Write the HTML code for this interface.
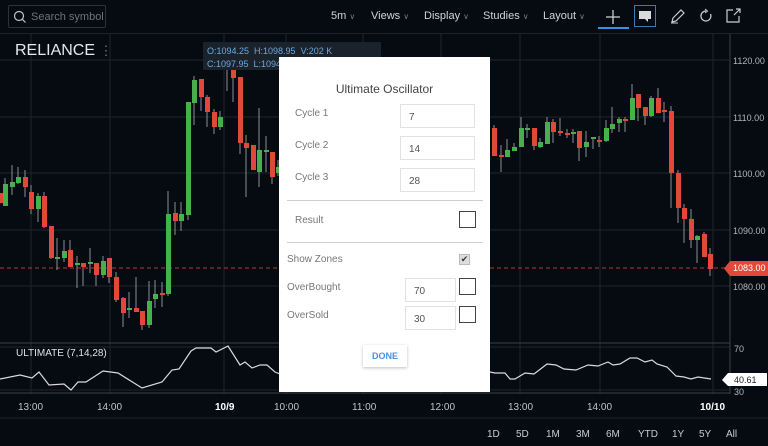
<!DOCTYPE html>
<html><head><meta charset="utf-8"><style>
*{margin:0;padding:0;box-sizing:border-box}
body{width:768px;height:446px;background:#060b12;font-family:"Liberation Sans",sans-serif;overflow:hidden;position:relative;color:#c8ccd2}
.abs{position:absolute}
.tb{font-size:11px;color:#d0d4da;top:10px}
.dlg{left:279px;top:57px;width:211px;height:335px;background:#fff;color:#777;font-size:10px}
.inp{position:absolute;border:1px solid #e2e2e2;color:#555;font-size:10px;padding:7px 0 0 8px}
.cb{position:absolute;border:1px solid #444;width:17px;height:17px;background:#fff}
</style></head><body>
<!-- toolbar -->
<div class="abs" style="left:0;top:33px;width:768px;height:1px;background:#1c232c"></div>
<div class="abs" style="left:8px;top:5px;width:98px;height:23px;border:1px solid #2a323c;border-radius:2px"></div>
<svg class="abs" style="left:13px;top:10px" width="14" height="14"><circle cx="6" cy="6" r="4.5" stroke="#c0c4ca" fill="none" stroke-width="1.2"/><line x1="9.2" y1="9.2" x2="12.5" y2="12.5" stroke="#c0c4ca" stroke-width="1.2"/></svg>
<div class="abs" style="left:31px;top:11px;font-size:11px;color:#6d747c">Search symbol</div>
<div class="abs tb" style="left:331px">5m <span style="color:#777;font-size:8px">∨</span></div>
<div class="abs tb" style="left:371px">Views <span style="color:#777;font-size:8px">∨</span></div>
<div class="abs tb" style="left:424px">Display <span style="color:#777;font-size:8px">∨</span></div>
<div class="abs tb" style="left:483px">Studies <span style="color:#777;font-size:8px">∨</span></div>
<div class="abs tb" style="left:543px">Layout <span style="color:#777;font-size:8px">∨</span></div>
<svg class="abs" style="left:598px;top:6px" width="32" height="24"><line x1="15" y1="4" x2="15" y2="18" stroke="#ccc" stroke-width="1.3"/><line x1="8" y1="11" x2="22" y2="11" stroke="#ccc" stroke-width="1.3"/><rect x="0" y="21" width="31" height="2" fill="#3a8ee6"/></svg>
<svg class="abs" style="left:634px;top:5px" width="24" height="24"><rect x="0.5" y="0.5" width="21" height="21" fill="none" stroke="#3f79b5"/><rect x="5" y="6" width="12" height="8" fill="#d8dadd"/><path d="M11 14 L14 17 L14 14Z" fill="#d8dadd"/></svg>
<svg class="abs" style="left:669px;top:7px" width="18" height="18"><path d="M3 15 L4 11 L12 3 L15 6 L7 14 Z" fill="none" stroke="#ccc" stroke-width="1.2"/><line x1="2" y1="16" x2="9" y2="16" stroke="#ccc"/></svg>
<svg class="abs" style="left:698px;top:8px" width="16" height="16"><path d="M8 3 A5 5 0 1 0 12.5 6" fill="none" stroke="#ccc" stroke-width="1.2"/><path d="M7 1 L9.5 3 L7 5" fill="none" stroke="#ccc"/></svg>
<svg class="abs" style="left:725px;top:7px" width="18" height="18"><path d="M8 3 H2 V15 H14 V9" fill="none" stroke="#ccc" stroke-width="1.2"/><path d="M9 8 L15 2 M11 2 H15 V6" fill="none" stroke="#ccc" stroke-width="1.2"/></svg>

<!-- chart -->
<svg class="abs" style="left:0;top:34px" width="768" height="412">
<g stroke="#1e252e" stroke-width="1">
<line x1="0" y1="26" x2="730" y2="26"/><line x1="0" y1="83" x2="730" y2="83"/><line x1="0" y1="139" x2="730" y2="139"/><line x1="0" y1="196" x2="730" y2="196"/><line x1="0" y1="252" x2="730" y2="252"/>
<line x1="31" y1="0" x2="31" y2="360"/><line x1="110" y1="0" x2="110" y2="360"/><line x1="224" y1="0" x2="224" y2="360"/><line x1="286" y1="0" x2="286" y2="360"/><line x1="363" y1="0" x2="363" y2="360"/><line x1="441" y1="0" x2="441" y2="360"/><line x1="520" y1="0" x2="520" y2="360"/><line x1="600" y1="0" x2="600" y2="360"/><line x1="713" y1="0" x2="713" y2="360"/>
<line x1="0" y1="313" x2="730" y2="313"/><line x1="0" y1="356" x2="730" y2="356"/>
</g>
<line x1="0" y1="309" x2="730" y2="309" stroke="#3a4048"/>
<line x1="0" y1="359" x2="730" y2="359" stroke="#3a4048"/>
<line x1="730" y1="0" x2="730" y2="360" stroke="#3a4048"/>
<line x1="0" y1="384" x2="768" y2="384" stroke="#1c232c"/>
</svg>
<svg class="abs" style="left:0;top:0" width="768" height="446">
<line x1="0" y1="268" x2="730" y2="268" stroke="#b83a30" stroke-dasharray="4,3"/>
<g stroke="#8a8f96" stroke-width="1">
<path d="M5 178V206M12 165V195M18 167V184M25 170V197M31 185V214M38 193V222M44 192V228M51 226V259M57 238V270M64 240V262M70 240V267M77 256V288M83 263V286M90 248V273M96 263V286M103 256V278M109 258V283M116 272V302M123 297V327M129 292V318M136 277V312M142 311V330M149 281V328M155 280V308M162 282V307M168 191V296M175 202V235M181 202V231M188 102V220M194 76V125M201 79V111M207 95V127M214 109V134M220 111V130M227 70V91M233 70V102M240 77V154M246 135V197M253 145V170M259 108V187M266 136V172M272 152V184M278 160V176"/>
<path d="M494 125V156M501 145V172M507 139V157M514 143V151M521 117V147M527 124V138M534 128V150M540 138V148M547 117V144M553 119V143M560 118V136M567 129V138M573 129V143M579 131V161M586 131V157M593 137V149M599 136V147M606 120V142M612 107V133M619 117V132M625 117V132M632 84V120M638 94V121M645 107V125M651 96V117M658 88V113M664 102V122M671 106V208M678 170V223M684 204V243M691 209V248M697 235V263M704 232V257M710 248V276"/>
</g>
<g fill="#e0493a">
<rect x="-2" y="193" width="5" height="10"/><rect x="23" y="177" width="5" height="10"/><rect x="29" y="192" width="5" height="17"/><rect x="42" y="196" width="5" height="31"/><rect x="49" y="226" width="5" height="32"/><rect x="68" y="250" width="5" height="17"/><rect x="81" y="263" width="5" height="4"/><rect x="94" y="263" width="5" height="12"/><rect x="107" y="258" width="5" height="19"/><rect x="114" y="277" width="5" height="23"/><rect x="121" y="298" width="5" height="15"/><rect x="134" y="308" width="5" height="4"/><rect x="140" y="311" width="5" height="14"/><rect x="160" y="293" width="5" height="2"/><rect x="173" y="213" width="5" height="8"/><rect x="199" y="79" width="5" height="18"/><rect x="205" y="97" width="5" height="15"/><rect x="212" y="112" width="5" height="15"/><rect x="231" y="70" width="5" height="8"/><rect x="238" y="77" width="5" height="66"/><rect x="244" y="143" width="5" height="5"/><rect x="251" y="145" width="5" height="25"/><rect x="270" y="152" width="5" height="25"/>
<rect x="492" y="128" width="5" height="28"/><rect x="499" y="155" width="5" height="2"/><rect x="532" y="128" width="5" height="18"/><rect x="551" y="122" width="5" height="10"/><rect x="558" y="131" width="5" height="2"/><rect x="565" y="133" width="5" height="2"/><rect x="577" y="131" width="5" height="17"/><rect x="597" y="140" width="5" height="2"/><rect x="623" y="119" width="5" height="2"/><rect x="636" y="94" width="5" height="14"/><rect x="643" y="107" width="5" height="9"/><rect x="656" y="98" width="5" height="15"/><rect x="662" y="110" width="5" height="2"/><rect x="669" y="111" width="5" height="62"/><rect x="676" y="173" width="5" height="35"/><rect x="682" y="208" width="5" height="11"/><rect x="689" y="219" width="5" height="21"/><rect x="702" y="234" width="5" height="23"/><rect x="708" y="254" width="5" height="15"/>
</g>
<g fill="#46b04a">
<rect x="3" y="184" width="5" height="22"/><rect x="10" y="182" width="5" height="5"/><rect x="16" y="177" width="5" height="6"/><rect x="36" y="196" width="5" height="13"/><rect x="55" y="257" width="5" height="2"/><rect x="62" y="251" width="5" height="7"/><rect x="75" y="263" width="5" height="2"/><rect x="88" y="262" width="5" height="2"/><rect x="101" y="261" width="5" height="14"/><rect x="127" y="308" width="5" height="2"/><rect x="147" y="301" width="5" height="24"/><rect x="153" y="294" width="5" height="5"/><rect x="166" y="214" width="5" height="80"/><rect x="179" y="214" width="5" height="7"/><rect x="186" y="102" width="5" height="113"/><rect x="192" y="80" width="5" height="23"/><rect x="218" y="117" width="5" height="10"/><rect x="257" y="150" width="5" height="22"/><rect x="264" y="150" width="5" height="2"/><rect x="276" y="167" width="5" height="6"/>
<rect x="505" y="150" width="5" height="7"/><rect x="512" y="147" width="5" height="4"/><rect x="519" y="128" width="5" height="19"/><rect x="525" y="128" width="5" height="2"/><rect x="538" y="142" width="5" height="5"/><rect x="545" y="122" width="5" height="22"/><rect x="571" y="132" width="5" height="2"/><rect x="584" y="142" width="5" height="5"/><rect x="591" y="137" width="5" height="2"/><rect x="604" y="128" width="5" height="13"/><rect x="610" y="124" width="5" height="5"/><rect x="617" y="119" width="5" height="4"/><rect x="630" y="98" width="5" height="22"/><rect x="649" y="98" width="5" height="18"/><rect x="695" y="236" width="5" height="4"/>
</g>
<!-- oscillator line -->
<polyline fill="none" stroke="#d8dadd" stroke-width="1.2" points="0,379 20,375 32,378 39,372 49,385 64,384 71,390 78,382 86,382 103,371 118,373 142,388 162,382 172,370 179,369 191,351 196,348 211,348 216,352 228,346 240,365 245,362 252,368 260,365 267,365 275,372 280,374"/>
<polyline fill="none" stroke="#d8dadd" stroke-width="1.2" points="490,372 495,373 505,373 510,379 515,379 525,373 534,374 547,364 556,365 564,369 576,370 588,365 598,366 608,362 613,365 620,364 630,358 637,358 645,362 652,360 657,364 667,367 676,376 684,377 691,379 698,377 711,379"/>
</svg>
<!-- labels -->
<div class="abs" style="left:15px;top:42px;font-size:16px;color:#e6e8eb">RELIANCE <span style="color:#777;font-size:13px">⋮</span></div>
<div class="abs" style="left:203px;top:42px;width:178px;height:28px;background:#1a222c"></div>
<div class="abs" style="left:207px;top:45px;font-size:9px;color:#6fa8dc;line-height:13px">O:1094.25 &nbsp;H:1098.95 &nbsp;V:202 K<br>C:1097.95 &nbsp;L:1094.25</div>
<div class="abs" style="left:16px;top:348px;font-size:10px;color:#e0e2e5">ULTIMATE (7,14,28)</div>
<div class="abs" style="left:733px;top:56px;font-size:9px;color:#b0b4ba">1120.00</div>
<div class="abs" style="left:733px;top:113px;font-size:9px;color:#b0b4ba">1110.00</div>
<div class="abs" style="left:733px;top:169px;font-size:9px;color:#b0b4ba">1100.00</div>
<div class="abs" style="left:733px;top:226px;font-size:9px;color:#b0b4ba">1090.00</div>
<div class="abs" style="left:733px;top:282px;font-size:9px;color:#b0b4ba">1080.00</div>
<svg class="abs" style="left:724px;top:261px" width="44" height="15"><path d="M0 7.5 L6 0 H44 V15 H6 Z" fill="#e0493a"/></svg>
<div class="abs" style="left:733px;top:263px;font-size:9px;color:#fff">1083.00</div>
<div class="abs" style="left:734px;top:344px;font-size:9px;color:#b0b4ba">70</div>
<svg class="abs" style="left:722px;top:373px" width="46" height="14"><path d="M0 7 L6 0 H45 V13 H6 Z" fill="#fff"/></svg>
<div class="abs" style="left:734px;top:375px;font-size:9px;color:#222">40.61</div>
<div class="abs" style="left:734px;top:387px;font-size:9px;color:#b0b4ba">30</div>
<div class="abs" style="left:0;top:402px;width:768px;font-size:10px;color:#c0c4ca">
<span class="abs" style="left:18px">13:00</span><span class="abs" style="left:97px">14:00</span><span class="abs" style="left:215px;color:#fff;font-weight:bold">10/9</span><span class="abs" style="left:274px">10:00</span><span class="abs" style="left:352px">11:00</span><span class="abs" style="left:430px">12:00</span><span class="abs" style="left:508px">13:00</span><span class="abs" style="left:587px">14:00</span><span class="abs" style="left:700px;color:#fff;font-weight:bold">10/10</span></div>
<div class="abs" style="left:0;top:429px;width:768px;font-size:10px;color:#c8ccd2">
<span class="abs" style="left:487px">1D</span><span class="abs" style="left:516px">5D</span><span class="abs" style="left:546px">1M</span><span class="abs" style="left:576px">3M</span><span class="abs" style="left:606px">6M</span><span class="abs" style="left:638px">YTD</span><span class="abs" style="left:672px">1Y</span><span class="abs" style="left:699px">5Y</span><span class="abs" style="left:726px">All</span></div>

<!-- dialog -->
<div class="abs dlg">
<div class="abs" style="left:0;top:25px;width:211px;text-align:center;font-size:12px;color:#444">Ultimate Oscillator</div>
<div class="abs" style="left:16px;top:51px">Cycle 1</div>
<div class="abs" style="left:16px;top:83px">Cycle 2</div>
<div class="abs" style="left:16px;top:115px">Cycle 3</div>
<div class="inp" style="left:121px;top:47px;width:75px;height:24px">7</div>
<div class="inp" style="left:121px;top:79px;width:75px;height:24px">14</div>
<div class="inp" style="left:121px;top:111px;width:75px;height:24px">28</div>
<div class="abs" style="left:8px;top:143px;width:196px;height:1px;background:#ccc"></div>
<div class="abs" style="left:16px;top:158px">Result</div>
<div class="cb" style="left:180px;top:154px"></div>
<div class="abs" style="left:8px;top:185px;width:196px;height:1px;background:#ccc"></div>
<div class="abs" style="left:8px;top:197px">Show Zones</div>
<div class="abs" style="left:180px;top:197px;width:11px;height:11px;background:#ddd;border:1px solid #bbb;font-size:9px;line-height:9px;color:#333;text-align:center">✔</div>
<div class="abs" style="left:8px;top:225px">OverBought</div>
<div class="inp" style="left:126px;top:221px;width:51px;height:24px">70</div>
<div class="cb" style="left:180px;top:221px"></div>
<div class="abs" style="left:8px;top:253px">OverSold</div>
<div class="inp" style="left:126px;top:249px;width:51px;height:24px">30</div>
<div class="cb" style="left:180px;top:249px"></div>
<div class="abs" style="left:84px;top:288px;width:44px;height:22px;box-shadow:0 1px 3px rgba(0,0,0,.25);text-align:center;line-height:22px;color:#4a90e2;font-size:9px;font-weight:bold">DONE</div>
</div>
</body></html>
